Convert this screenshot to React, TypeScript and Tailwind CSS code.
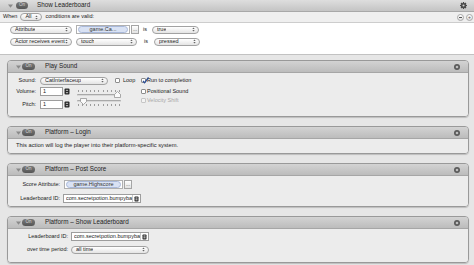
import React from "react";

// GameSalad-style behaviour editor: one rule + a stack of action panels

const Tri = ({ className = "" }: { className?: string }) => (
  <svg width="5" height="4" viewBox="0 0 5 4" className={className}>
    <path d="M0 0.5 L5 0.5 L2.5 3.8 Z" fill="#8a8a8a" />
  </svg>
);

const OnPill = ({ className = "" }: { className?: string }) => (
  <div className={`h-[7px] rounded-full bg-gradient-to-b from-[#7a7a7a] to-[#555] flex items-center justify-center text-[4.5px] leading-none text-[#d8d8d8] ${className}`}>
    On
  </div>
);

const CloseDot = () => (
  <svg width="6" height="6" viewBox="0 0 6 6" className="ml-auto">
    <circle cx="3" cy="3" r="3" fill="#5a5a5a" />
    <circle cx="3" cy="3" r="1.3" fill="#bdbdbd" />
  </svg>
);

const Gear = () => (
  <svg width="7" height="7" viewBox="0 0 8 8" className="ml-auto">
    <g fill="#4a4a4a">
      <circle cx="4" cy="4" r="3" />
      <rect x="3.3" y="0" width="1.4" height="8" />
      <rect x="0" y="3.3" width="8" height="1.4" />
      <rect x="3.3" y="0" width="1.4" height="8" transform="rotate(45 4 4)" />
      <rect x="3.3" y="0" width="1.4" height="8" transform="rotate(-45 4 4)" />
    </g>
    <circle cx="4" cy="4" r="1.2" fill="#d0d0d0" />
  </svg>
);

const Arrows = () => (
  <svg width="3" height="5" viewBox="0 0 3 5" className="shrink-0">
    <path d="M0.3 2 L1.5 0.6 L2.7 2 Z M0.3 3 L1.5 4.4 L2.7 3 Z" fill="#666" />
  </svg>
);

const Popup = ({ text, className = "" }: { text: string; className?: string }) => (
  <div className={`h-[8px] rounded-full border border-[#a2a2a2] bg-gradient-to-b from-white to-[#e4e4e4] flex items-center justify-between pl-[4px] pr-[3px] text-[5.5px] leading-none text-[#222] shrink-0 ${className}`}>
    <span className="truncate">{text}</span>
    <Arrows />
  </div>
);

const AttrIcon = () => (
  <svg width="5" height="6" viewBox="0 0 5 6" className="shrink-0">
    <rect x="0.5" y="0.5" width="4" height="5" rx="0.8" fill="#2a2a2a" />
    <rect x="1.5" y="1.5" width="2" height="1" fill="#e0e0e0" />
    <rect x="1.5" y="3.3" width="2" height="1" fill="#e0e0e0" />
  </svg>
);

const TextField = ({ text, className = "", icon = true }: { text: string; className?: string; icon?: boolean }) => (
  <div className={`h-[9px] bg-white border border-[#9d9d9d] flex items-center pl-[2px] pr-[1px] text-[5.5px] leading-none text-[#222] shrink-0 ${className}`}>
    <span className="flex-1 overflow-hidden whitespace-nowrap">{text}</span>
    {icon && (
      <div className="w-[7px] h-[7px] border-l border-[#c8c8c8] flex items-center justify-center">
        <AttrIcon />
      </div>
    )}
  </div>
);

const Token = ({ text, className = "" }: { text: string; className?: string }) => (
  <div className="flex items-center gap-[1px] shrink-0">
    <div className={`h-[9px] bg-white border border-[#b0b0b0] flex items-center px-[1px] ${className}`}>
      <div className="h-[7px] w-full rounded-full bg-[#d9e2f4] border border-[#a9b9da] flex items-center justify-center text-[5.5px] leading-none text-[#333]">
        {text}
      </div>
    </div>
    <div className="w-[8px] h-[9px] border border-[#a5a5a5] bg-gradient-to-b from-white to-[#e2e2e2] flex items-center justify-center text-[5px] leading-none text-[#444]">
      ...
    </div>
  </div>
);

const Check = ({ checked = false, disabled = false, className = "" }: { checked?: boolean; disabled?: boolean; className?: string }) => (
  <div className={`relative w-[5px] h-[5px] rounded-[1px] border ${disabled ? "border-[#c6c6c6] bg-[#f3f3f3]" : "border-[#8d8d8d] bg-white"} shrink-0 ${className}`}>
    {checked && (
      <svg width="7" height="7" viewBox="0 0 7 7" className="absolute -top-[2px] left-0">
        <path d="M1 4 L2.6 5.8 L6.5 0.5" stroke="#2d4f95" strokeWidth="1.3" fill="none" />
      </svg>
    )}
  </div>
);

const Ticks = ({ className = "" }: { className?: string }) => (
  <div className={`flex justify-between px-[1px] ${className}`}>
    {Array.from({ length: 11 }).map((_, i) => (
      <div key={i} className="w-[1px] h-[2px] bg-[#9c9c9c]" />
    ))}
  </div>
);

const Slider = ({ pos, ticksBelow = false }: { pos: number; ticksBelow?: boolean }) => (
  <div className={`relative w-[44px] h-[9px] flex flex-col ${ticksBelow ? "justify-start" : "justify-end"} shrink-0`}>
    {!ticksBelow && <Ticks className="mb-[2px]" />}
    <div className="h-[2px] rounded-full bg-[#a9a9a9] border-b border-[#d8d8d8]" />
    {ticksBelow && <Ticks className="mt-[2px]" />}
    <svg
      width="7"
      height="7"
      viewBox="0 0 7 7"
      className={`absolute ${ticksBelow ? "top-[-2px]" : "bottom-[-2px]"}`}
      style={{ left: pos }}
    >
      {ticksBelow ? (
        <path d="M0.5 0.5 H6.5 V3.5 L3.5 6.5 L0.5 3.5 Z" fill="#fafafa" stroke="#8a8a8a" strokeWidth="0.7" />
      ) : (
        <path d="M0.5 6.5 H6.5 V3.5 L3.5 0.5 L0.5 3.5 Z" fill="#fafafa" stroke="#8a8a8a" strokeWidth="0.7" />
      )}
    </svg>
  </div>
);

const Stepper = () => (
  <svg width="6" height="7" viewBox="0 0 6 7" className="shrink-0 ml-[1px]">
    <rect x="0.5" y="0.5" width="5" height="6" rx="1" fill="#2a2a2a" />
    <path d="M1.6 2.8 L3 1.4 L4.4 2.8 Z M1.6 4.2 L3 5.6 L4.4 4.2 Z" fill="#e6e6e6" />
  </svg>
);

function Panel({ title, children, body }: { title: string; children: React.ReactNode; body: string }) {
  return (
    <div className="ml-[7px] mr-[5px] rounded-[4px] border border-[#999] overflow-hidden shadow-[0_1px_1px_rgba(0,0,0,0.18)]">
      <div className="h-[12px] flex items-center pl-[8px] pr-[8px] bg-gradient-to-b from-[#d3d3d3] to-[#bcbcbc] border-b border-[#a6a6a6]">
        <Tri />
        <OnPill className="w-[13px] ml-[1px]" />
        <span className="ml-[10px] text-[6.3px] leading-none text-[#1e1e1e]">{title}</span>
        <CloseDot />
      </div>
      <div className={`bg-[#ececec] ${body}`}>{children}</div>
    </div>
  );
}

const Label = ({ text, className = "" }: { text: string; className?: string }) => (
  <span className={`text-right text-[5.5px] leading-none text-[#222] shrink-0 ${className}`}>{text}</span>
);

export default function App() {
  return (
    <div className="w-[474px] h-[265px] overflow-hidden bg-[#e6e6e6] font-['Liberation_Sans',Arial,sans-serif]">
      {/* rule block */}
      <div className="h-[12px] flex items-center pl-[8px] pr-[7px] bg-gradient-to-b from-[#dedede] to-[#c4c4c4] border-b border-[#a8a8a8]">
        <Tri />
        <OnPill className="w-[12px] ml-[3px]" />
        <span className="ml-[9px] text-[6.3px] leading-none text-[#1e1e1e]">Show Leaderboard</span>
        <Gear />
      </div>
      <div className="h-[11px] flex items-center pl-[3px] pr-[1px] bg-[#efefef] border-b border-[#cdcdcd] text-[5.5px] leading-none text-[#222]">
        <span>When</span>
        <Popup text="All" className="w-[22px] ml-[3px]" />
        <span className="ml-[3px]">conditions are valid:</span>
        <div className="ml-auto flex gap-[2px]">
          <div className="w-[7px] h-[7px] rounded-full border border-[#a8a8a8] bg-gradient-to-b from-white to-[#e0e0e0] flex items-center justify-center">
            <div className="w-[3px] h-[1px] bg-[#555]" />
          </div>
          <div className="w-[7px] h-[7px] rounded-full border border-[#a8a8a8] bg-gradient-to-b from-white to-[#e0e0e0] flex items-center justify-center text-[5px] leading-none text-[#555]">
            +
          </div>
        </div>
      </div>
      <div className="h-[32px] bg-white border-b border-[#c2c2c2] flex flex-col gap-[3px] pt-[2px] pl-[10px] text-[5.5px] leading-none text-[#222]">
        <div className="flex items-center h-[9px]">
          <Popup text="Attribute" className="w-[62px]" />
          <Token text="game.Ca..." className="w-[54px] ml-[4px]" />
          <span className="ml-[4px]">is</span>
          <Popup text="true" className="w-[47px] ml-[5px]" />
        </div>
        <div className="flex items-center h-[9px]">
          <Popup text="Actor receives event" className="w-[62px]" />
          <Popup text="touch" className="w-[61px] ml-[4px]" />
          <span className="ml-[7px]">is</span>
          <Popup text="pressed" className="w-[46px] ml-[6px]" />
        </div>
      </div>

      {/* actions */}
      <div className="flex flex-col gap-[9px] pt-[5px]">
        <Panel title="Play Sound" body="h-[43px] flex pl-[8px]">
          <div className="w-[117px] shrink-0 flex flex-col pt-[3px]">
            <div className="flex items-center h-[9px]">
              <Label text="Sound:" className="w-[20px]" />
              <Popup text="CatInterfaceup" className="w-[68px] ml-[4px]" />
              <Check className="ml-[7px]" />
              <span className="ml-[3px] text-[5.5px] leading-none text-[#222]">Loop</span>
            </div>
            <div className="flex items-center h-[9px] mt-[2px]">
              <Label text="Volume:" className="w-[20px]" />
              <TextField text="1" icon={false} className="w-[23px] ml-[4px]" />
              <Stepper />
              <div className="ml-[7px]">
                <Slider pos={37} />
              </div>
            </div>
            <div className="flex items-center h-[9px] mt-[4px]">
              <Label text="Pitch:" className="w-[20px]" />
              <TextField text="1" icon={false} className="w-[23px] ml-[4px]" />
              <Stepper />
              <div className="ml-[7px]">
                <Slider pos={3} ticksBelow />
              </div>
            </div>
          </div>
          <div className="flex flex-col pt-[3px] ml-[8px] text-[5.5px] leading-none text-[#222]">
            <div className="flex items-center h-[9px]">
              <Check checked />
              <span className="ml-[1px]">Run to completion</span>
            </div>
            <div className="flex items-center h-[9px] mt-[2px]">
              <Check />
              <span className="ml-[1px]">Positional Sound</span>
            </div>
            <div className="flex items-center h-[9px]">
              <Check disabled />
              <span className="ml-[1px] text-[#a8a8a8]">Velocity Shift</span>
            </div>
          </div>
        </Panel>

        <Panel title="Platform – Login" body="h-[14px] flex items-center pl-[8px]">
          <span className="text-[5.75px] leading-none text-[#222]">
            This action will log the player into their platform-specific system.
          </span>
        </Panel>

        <Panel title="Platform – Post Score" body="h-[30px] flex flex-col pt-[4px] gap-[5px] pl-[8px]">
          <div className="flex items-center h-[9px]">
            <Label text="Score Attribute:" className="w-[44px]" />
            <Token text="game.Highscore" className="w-[59px] ml-[4px]" />
          </div>
          <div className="flex items-center h-[9px]">
            <Label text="Leaderboard ID:" className="w-[44px]" />
            <TextField text="com.secretpotion.bumpybal" className="w-[78px] ml-[3px]" />
          </div>
        </Panel>

        <Panel title="Platform – Show Leaderboard" body="h-[33px] flex flex-col pt-[3px] gap-[4px] pl-[8px]">
          <div className="flex items-center h-[9px]">
            <Label text="Leaderboard ID:" className="w-[52px]" />
            <TextField text="com.secretpotion.bumpybal" className="w-[78px] ml-[3px]" />
          </div>
          <div className="flex items-center h-[9px]">
            <Label text="over time period:" className="w-[52px]" />
            <Popup text="all time" className="w-[78px] ml-[3px]" />
          </div>
        </Panel>
      </div>
    </div>
  );
}
